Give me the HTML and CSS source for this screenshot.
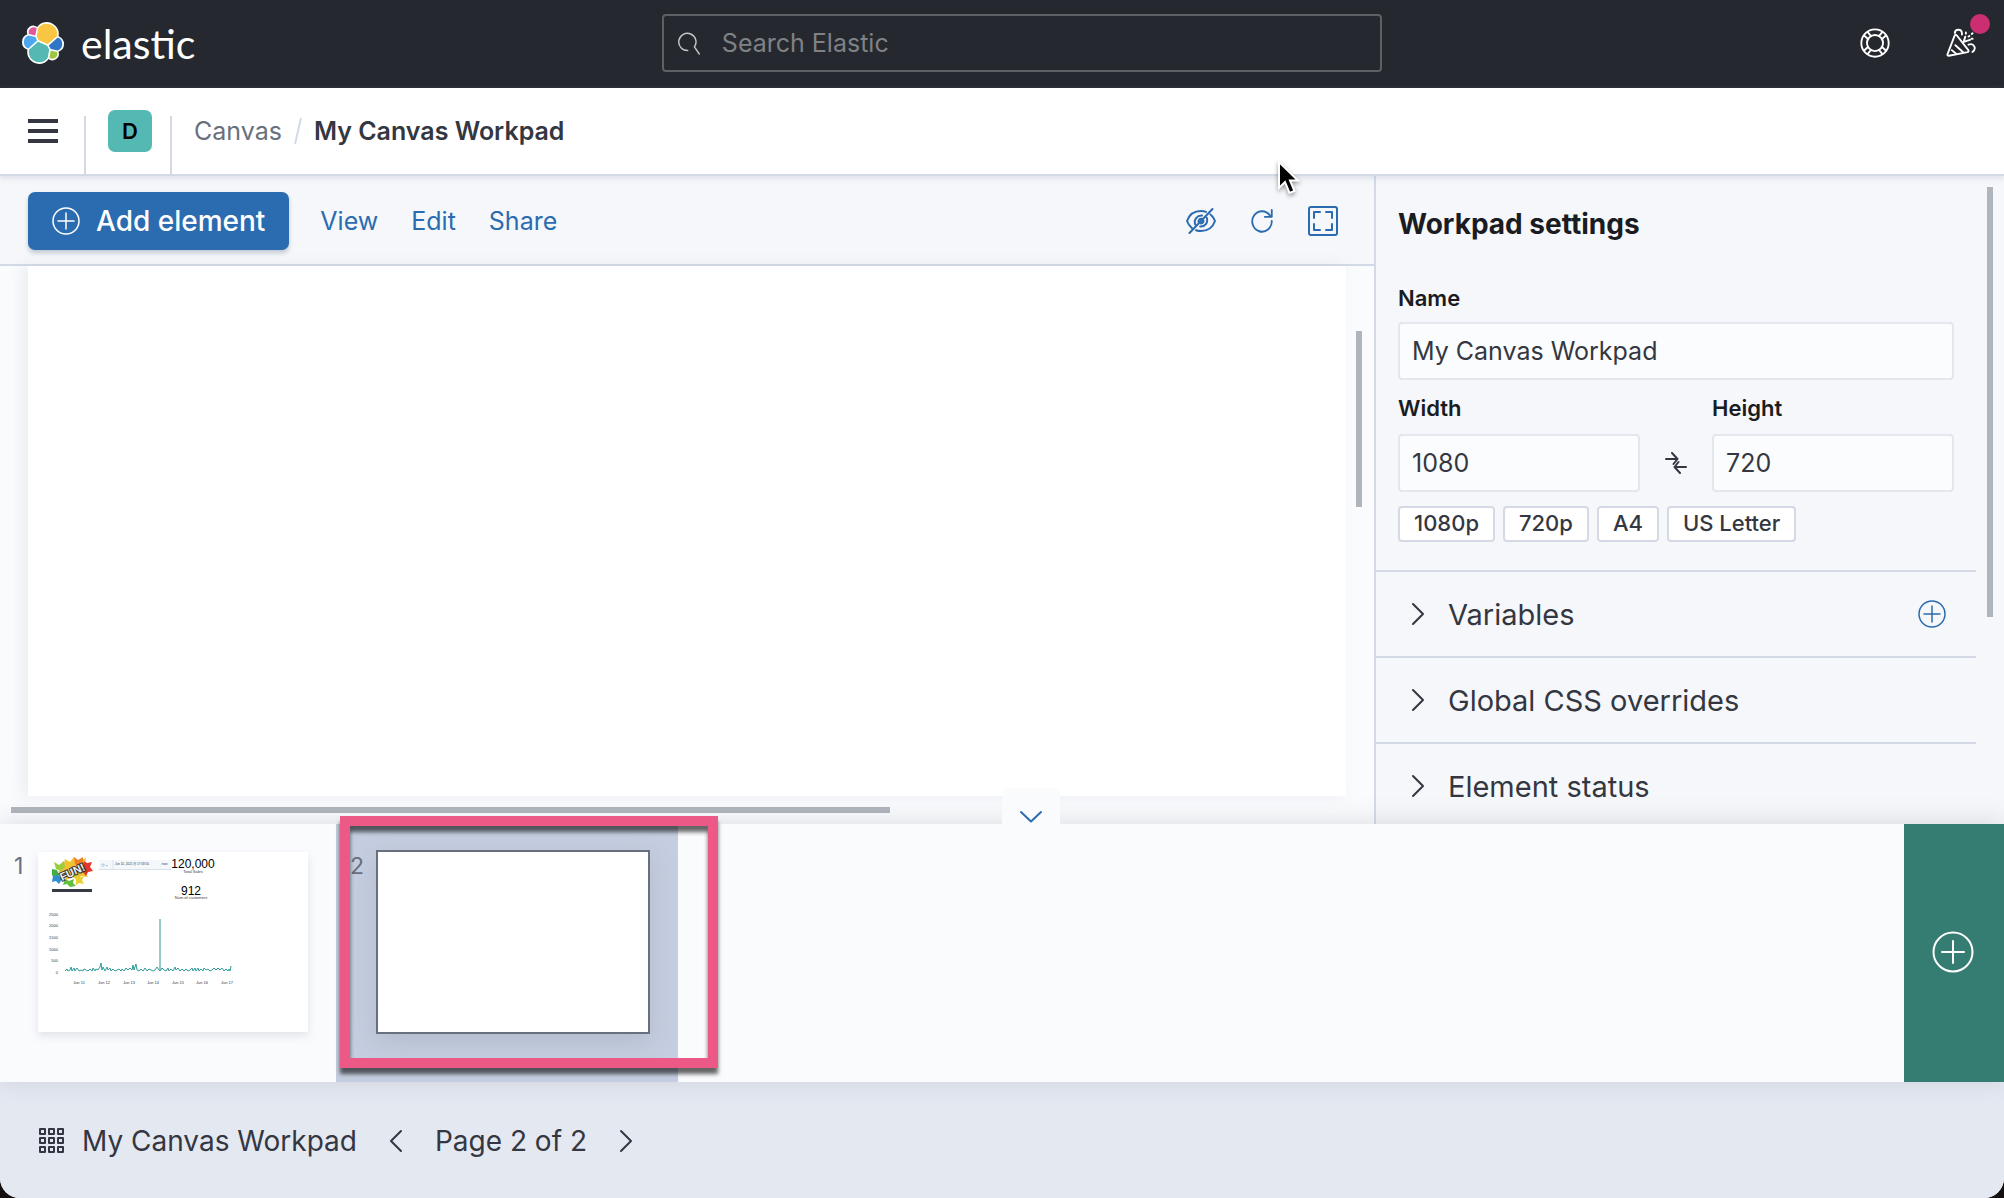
FILE: index.html
```html
<!DOCTYPE html>
<html lang="en">
<head>
  <meta charset="UTF-8" />
  <title>My Canvas Workpad - Canvas - Elastic</title>
  <link rel="stylesheet" href="styles.css">
</head>
<body>
  <div class="app">
    <header class="header">
      <a class="brand" href="#">
        <svg class="brand-logo" viewBox="0 0 32 32" aria-hidden="true">
          <path fill="#fff" d="M32 16.77a6.334 6.334 0 0 0-1.14-3.63 6.269 6.269 0 0 0-3.02-2.29 9.044 9.044 0 0 0-3.87-9.2 8.905 8.905 0 0 0-12.4 2.18 4.778 4.778 0 0 0-7.45 5.45A6.32 6.32 0 0 0 0 15.22a6.368 6.368 0 0 0 4.16 5.96 9.034 9.034 0 0 0 8.85 10.77 8.932 8.932 0 0 0 7.31-3.8 4.775 4.775 0 0 0 7.44-5.44A6.33 6.33 0 0 0 32 16.77"/>
          <path fill="#F8C642" d="m12.58 13.79 7 3.2 7.05-6.2c.1-.5.15-1.03.15-1.55a7.893 7.893 0 0 0-14.4-4.46l-1.18 6.1z"/>
          <path fill="#54B9B2" d="M5.37 21.21a7.9 7.9 0 0 0 7.7 9.47 7.87 7.87 0 0 0 6.52-3.47l1.16-6.05-1.55-2.97-7.02-3.2z"/>
          <path fill="#E2579A" d="m5.33 9.09 4.79 1.13 1.05-5.43a3.775 3.775 0 0 0-5.84 4.3"/>
          <path fill="#4DA7EF" d="M4.91 10.23a5.3 5.3 0 0 0-.15 9.95l6.72-6.07-1.23-2.64z"/>
          <path fill="#9DC740" d="M20.87 27.2a3.77 3.77 0 0 0 5.83-4.28l-4.78-1.12z"/>
          <path fill="#2F76C7" d="m21.85 20.53 5.26 1.23a5.3 5.3 0 0 0 .16-9.95l-6.89 6.04z"/>
        </svg>
        <span class="brand-name">elastic</span>
      </a>
      <label class="search">
        <svg class="icon search-icon" viewBox="0 0 16 16" aria-hidden="true"><path d="M7.500 12.900A6 6 0 1 1 12.100 10.400L15.500 15.300"/></svg>
        <input type="search" placeholder="Search Elastic" aria-label="Search Elastic">
      </label>
      <div class="header-links">
        <button class="icon-button" aria-label="Help">
          <svg class="icon help-icon" viewBox="0 0 16 16"><circle cx="8" cy="8" r="7.3"/><circle cx="8" cy="8" r="4.3"/><path d="M4 2.1 5.9 4.3M2.2 4 4.4 6M12 2.1 10.1 4.3M13.8 4 11.6 6M4 13.9 5.9 11.7M2.2 12 4.4 10M12 13.9 10.1 11.7M13.8 12 11.6 10"/></svg>
        </button>
        <button class="icon-button news" aria-label="News feed">
          <svg class="icon news-icon" viewBox="0 0 16 16"><path d="M4.6 4.1.8 14a.6.6 0 0 0 .7.8l10-1.9a.7.7 0 0 0 .3-1.2L5.8 4a.7.7 0 0 0-1.2.1zM3.100 11.800l2.400 2.100M5 9.200l4 3.600M4.700 2.700c.2-2.400 3.800-2.400 3.800.2v.6M9.400 7.400 10.300 4.600M9.400 7.400 12.800 6.300M12 8.900c3-1.200 4.500 2.200 2.100 3.900"/><path stroke-dasharray=".6 1.6" d="M10.600 2.400v2M12 4.600 14.600 2.500M13.600 5.700h1.400"/></svg>
          <span class="news-dot"></span>
        </button>
      </div>
    </header>

    <nav class="subheader" aria-label="Breadcrumbs">
      <button class="menu-button" aria-label="Toggle primary navigation"><span></span><span></span><span></span></button>
      <div class="space"><button class="avatar">D</button></div>
      <div class="breadcrumbs">
        <a href="#">Canvas</a>
        <svg class="slash" viewBox="0 0 10 28" aria-hidden="true"><path d="M8 1 2 27"/></svg>
        <strong>My Canvas Workpad</strong>
      </div>
    </nav>

    <main class="main">
      <section class="stage">
        <div class="toolbar">
          <button class="add-button">
            <svg class="icon icon-28" viewBox="0 0 28 28"><circle cx="14" cy="14" r="13"/><path d="M14 6v16M6 14h16"/></svg>
            Add element
          </button>
          <div class="menus">
            <button>View</button>
            <button>Edit</button>
            <button>Share</button>
          </div>
          <div class="view-tools">
            <button class="icon-button" aria-label="Hide editing controls">
              <svg class="icon eye-icon" viewBox="0 0 30 28"><path d="M3.500 26 26.500 2M6 21.200C3.800 19.300 2 16.800 1 14 3.200 7.600 8.600 4 15 4c1.800 0 3.500.3 5 .9M24.500 7.500C26.600 9.300 28.200 11.500 29 14c-2.200 6.400-7.600 10-14 10-1.800 0-3.500-.3-5-.8M9.200 17.500C7.600 12.500 11 8.300 16 8.600M20.800 10.800c1.500 4.800-1.800 9-6.600 8.700M12.500 15c-.2-2 1-3.300 3-3.200M17.500 13.500c0 1.600-.9 2.700-2.500 2.900"/></svg>
            </button>
            <button class="icon-button" aria-label="Refresh data">
              <svg class="icon refresh-icon" viewBox="0 0 24 28"><path d="M22.500 2v7.500H15M20.500 8A10.500 11 0 1 0 22.500 14"/></svg>
            </button>
            <button class="icon-button" aria-label="Enter fullscreen mode">
              <svg class="icon icon-30" viewBox="0 0 30 30"><rect x="1" y="1" width="28" height="28" rx="2"/><path d="M6 12V6h6M18 6h6v6M24 18v6h-6M12 24H6v-6"/></svg>
            </button>
          </div>
        </div>
        <div class="canvas">
          <div class="canvas-page"></div>
          <span class="thumb-y"></span>
          <span class="thumb-x"></span>
        </div>
      </section>

      <aside class="sidebar">
        <div class="settings">
          <h1>Workpad settings</h1>
          <label for="name">Name</label>
          <input id="name" type="text" value="My Canvas Workpad">
          <div class="size-row">
            <div class="field">
              <label for="width">Width</label>
              <input id="width" type="text" value="1080">
            </div>
            <button class="icon-button swap" aria-label="Flip width and height">
              <svg class="icon icon-22" viewBox="0 0 22 22"><path d="M1 7h11M7 1l5.500 6-4 5M21 15H10M15 21l-5.500-6 4-5"/></svg>
            </button>
            <div class="field">
              <label for="height">Height</label>
              <input id="height" type="text" value="720">
            </div>
          </div>
          <div class="presets">
            <button>1080p</button>
            <button>720p</button>
            <button>A4</button>
            <button>US Letter</button>
          </div>
        </div>
        <div class="accordion">
          <button class="accordion-toggle"><svg class="icon chevron" viewBox="0 0 14 24"><path d="M2 2l10 10L2 22"/></svg>Variables</button>
          <button class="icon-button blue" aria-label="Add variable">
            <svg class="icon icon-28" viewBox="0 0 28 28"><circle cx="14" cy="14" r="13"/><path d="M14 6v16M6 14h16"/></svg>
          </button>
        </div>
        <div class="accordion">
          <button class="accordion-toggle"><svg class="icon chevron" viewBox="0 0 14 24"><path d="M2 2l10 10L2 22"/></svg>Global CSS overrides</button>
        </div>
        <div class="accordion">
          <button class="accordion-toggle"><svg class="icon chevron" viewBox="0 0 14 24"><path d="M2 2l10 10L2 22"/></svg>Element status</button>
        </div>
        <span class="sidebar-thumb"></span>
      </aside>
    </main>

    <section class="tray" aria-label="Pages">
      <button class="tray-toggle" aria-label="Close page tray">
        <svg class="icon toggle-icon" viewBox="0 0 24 14"><path d="M2 2l10 9.500L22 2"/></svg>
      </button>
      <div class="page-item">
        <span class="page-number">1</span>
        <a class="page-preview" href="#" aria-label="Page 1">
          <svg viewBox="0 0 270 180" aria-hidden="true">
            <g>
              <path fill="#f2c230" d="M27 7l5 3 4-5 4 4 8-3-1 6 5 4-6 3 4 6-7-1-3 5-5-4-7 3-2-6-6-2 5-4z"/>
              <path fill="#ef7f24" d="M36 5l4 3 5-3v5l5 2-6 3-7-3z"/>
              <path fill="#e0362c" d="M46 9l3 2 5-1-2 5 3 4-5 1-2 4-3-4-4-2 4-3z"/>
              <path fill="#9ccb3c" d="M16 10l5 3 5-4 1 6-4 4-5-2z"/>
              <path fill="#3fae49" d="M14 17l5 1 2 5-4 4-3-4z"/>
              <path fill="#2b8fd0" d="M15 24l5-1 4 4-3 5-3-3-4 1z"/>
              <path fill="#62c13c" d="M27 27l4 2 5-2-1 4 3 3-6 1-3-3-4 1z"/>
              <path fill="#e8d02f" d="M38 24l3 2 5-2-2 4 2 4-5-1-3 2z"/>
              <text class="fun" x="24" y="29" transform="rotate(-25 24 29)">FUN!</text>
            </g>
            <path fill="#353a45" d="M14 37h40v3H14z"/>
            <path fill="#f5f8fb" d="M61 8h72v10H61z"/>
            <path class="picker" d="M61 17.500h72M75 8v9"/>
            <text class="tiny blue-text" x="63" y="14">◷ ⌄</text>
            <text class="tiny small" x="77" y="13">Jun 10, 2021 @ 17:58:50.</text>
            <text class="tiny small" x="120" y="13">→ now</text>
            <text class="metric" x="155" y="16">120,000</text>
            <text class="tiny" x="155" y="21" text-anchor="middle">Total Sales</text>
            <text class="metric" x="153" y="43">912</text>
            <text class="tiny" x="153" y="47" text-anchor="middle">Num of customers</text>
            <g class="tiny" text-anchor="end">
              <text x="20" y="64">2500</text><text x="20" y="75">2000</text><text x="20" y="87">1500</text>
              <text x="20" y="99">1000</text><text x="20" y="110">500</text><text x="20" y="122">0</text>
            </g>
            <g class="tiny" text-anchor="middle">
              <text x="41" y="132">Jun 11</text><text x="66" y="132">Jun 12</text><text x="91" y="132">Jun 13</text>
              <text x="115" y="132">Jun 14</text><text x="140" y="132">Jun 15</text><text x="164" y="132">Jun 16</text><text x="189" y="132">Jun 17</text>
            </g>
            <polyline class="series" points="27,119 29,117 30,119 32,118 33,115 34,119 36,116 37,119 39,116 41,119 43,118 45,119 46,117 48,118 50,119 52,117 54,119 55,116 57,119 58,117 60,118 62,115 63,111 64,118 65,115 67,119 69,115 70,118 72,116 73,119 75,117 77,119 79,118 81,117 83,119 84,117 86,119 88,116 90,118 92,116 94,118 95,113 96,118 98,112 99,118 101,119 103,117 105,119 107,116 109,119 111,117 113,118 115,119 117,118 119,115 121,118 122,119 124,116 126,118 128,119 130,116 131,119 133,117 135,119 137,115 138,118 140,116 142,119 144,117 146,119 148,117 150,119 152,118 154,116 155,119 157,116 158,119 160,116 161,119 163,117 165,119 166,116 168,118 170,117 172,119 174,118 176,116 178,118 180,116 182,118 184,116 186,119 188,117 190,119 191,117 192,119 193,114"/>
            <path class="spike" d="M122 118V67"/>
          </svg>
        </a>
      </div>
      <div class="page-item selected">
        <span class="page-number">2</span>
        <a class="page-preview" href="#" aria-label="Page 2"></a>
        <span class="highlight"></span>
      </div>
      <button class="add-page" aria-label="Add a new page">
        <svg class="icon add-page-icon" viewBox="0 0 42 42"><circle cx="21" cy="21" r="19.500"/><path d="M21 10v22M10 21h22"/></svg>
      </button>
    </section>

    <footer class="footer">
      <button class="workpad-name">
        <svg class="icon grid-icon" viewBox="0 0 26 26"><path d="M1 1h5v5H1zM10 1h5v5h-5zM19 1h5v5h-5zM1 10h5v5H1zM10 10h5v5h-5zM19 10h5v5h-5zM1 19h5v5H1zM10 19h5v5h-5zM19 19h5v5h-5z"/></svg>
        My Canvas Workpad
      </button>
      <button class="icon-button" aria-label="Previous page"><svg class="icon chevron" viewBox="0 0 14 24"><path d="M12 2L2 12l10 10"/></svg></button>
      <button class="page-count">Page 2 of 2</button>
      <button class="icon-button" aria-label="Next page"><svg class="icon chevron" viewBox="0 0 14 24"><path d="M2 2l10 10L2 22"/></svg></button>
    </footer>
  </div>

  <svg class="pointer" viewBox="0 0 26 40" aria-hidden="true"><path d="M3 3v26l6-6 4.500 11 5-2-4.500-10.500H22z"/></svg>
</body>
</html>
```

FILE: styles.css
```css
* {
  box-sizing: border-box;
}
body {
  margin: 0;
  background: #140f10;
  color: #343741;
  font-family: Inter, "Liberation Sans", sans-serif;
  font-size: 25px;
}
button {
  padding: 0;
  border: 0;
  background: none;
  color: inherit;
  font: inherit;
  white-space: nowrap;
}
a {
  color: inherit;
  text-decoration: none;
}
svg {
  display: block;
}
.app {
  display: flex;
  flex-direction: column;
  height: 100vh;
  overflow: hidden;
  border-radius: 0 0 20px 20px;
  background: #fafbfd;
}

/* icons */
.icon {
  flex: none;
  fill: none;
  stroke: currentColor;
  stroke-width: 2;
  stroke-linecap: round;
  stroke-linejoin: round;
}
.icon-button {
  display: flex;
  align-items: center;
  justify-content: center;
}
.icon-22 { width: 22px; height: 22px; }
.icon-28 { width: 28px; height: 28px; }
.icon-30 { width: 30px; height: 30px; }
.chevron { width: 14px; height: 24px; }

/* top header */
.header {
  display: grid;
  grid-template-columns: 14fr 720px 13fr;
  align-items: center;
  flex: none;
  height: 88px;
  padding: 0 28px 2px 22px;
  background: #25282f;
  color: #fff;
}
.brand {
  display: flex;
  align-items: center;
  gap: 17px;
}
.brand-logo {
  width: 42px;
  height: 42px;
}
.brand-name {
  padding-top: 2px;
  font-family: Lato, sans-serif;
  font-size: 41px;
  line-height: 48px;
}
.search {
  display: flex;
  align-items: center;
  gap: 22px;
  height: 58px;
  padding: 0 13px;
  border: 2px solid #5d6065;
  border-radius: 4px;
}
.search-icon {
  width: 23px;
  height: 23px;
  color: #c4c5c8;
  stroke-width: 1;
}
.search input {
  flex: 1;
  padding: 0;
  border: 0;
  background: none;
  color: #fff;
  font: inherit;
}
.search input::placeholder {
  color: #7f8185;
}
.header-links {
  display: flex;
  justify-content: flex-end;
  align-items: center;
  gap: 56px;
}
.help-icon {
  width: 30px;
  height: 30px;
  stroke-width: 1;
}
.news {
  position: relative;
}
.news-icon {
  width: 30px;
  height: 30px;
  stroke-width: 1;
}
.news-dot {
  position: absolute;
  top: -14px;
  right: -14px;
  width: 20px;
  height: 20px;
  border-radius: 50%;
  background: #cb2f72;
}

/* breadcrumb bar */
.subheader {
  position: relative;
  z-index: 1;
  display: flex;
  align-items: flex-end;
  flex: none;
  height: 88px;
  border-bottom: 2px solid #d3dae6;
  background: #fff;
  box-shadow: 0 2px 6px rgba(152, 162, 179, .3);
}
.menu-button {
  display: flex;
  flex-direction: column;
  align-items: center;
  gap: 6px;
  width: 84px;
  height: 55px;
}
.menu-button span {
  width: 30px;
  height: 4px;
  margin-left: 2px;
  background: #343741;
}
.space {
  display: flex;
  justify-content: center;
  height: 58px;
  width: 88px;
  padding-left: 4px;
  border: solid #d3dae6;
  border-width: 0 2px;
}
.avatar {
  width: 44px;
  height: 42px;
  margin-top: -6px;
  border-radius: 7px;
  background: #54b9b2;
  color: #000;
  font-size: 22px;
  font-weight: 600;
}
.breadcrumbs {
  display: flex;
  align-items: center;
  gap: 10px;
  height: 86px;
  padding-left: 22px;
  color: #69707d;
}
.breadcrumbs strong {
  color: #343741;
  font-weight: 600;
}
.slash {
  width: 12px;
  height: 28px;
  fill: none;
  stroke: #d3dae6;
  stroke-width: 2;
}

/* editor */
.main {
  display: flex;
  flex: 1;
  min-height: 0;
}
.stage {
  display: flex;
  flex-direction: column;
  flex: 1;
  min-width: 0;
}
.toolbar {
  display: flex;
  align-items: center;
  flex: none;
  height: 90px;
  padding: 2px 36px 0 28px;
  border-bottom: 2px solid #d3dae6;
  background: #f5f7fa;
  color: #2b6cb0;
}
.add-button {
  display: flex;
  align-items: center;
  gap: 16px;
  height: 58px;
  padding: 0 24px;
  border-radius: 7px;
  background: #2b6bb0;
  box-shadow: 0 3px 4px rgba(43, 64, 100, .25);
  color: #fff;
  font-size: 28px;
  font-weight: 500;
}
.add-button .icon {
  stroke-width: 1.5;
}
.menus {
  display: flex;
  gap: 33px;
  margin-left: 31px;
}
.view-tools {
  display: flex;
  align-items: center;
  gap: 34px;
  margin-left: auto;
}
.eye-icon { width: 30px; height: 28px; }
.refresh-icon { width: 24px; height: 26px; }
.canvas {
  position: relative;
  flex: 1;
  padding: 0 28px;
  padding-bottom: 28px;
}
.canvas-page {
  height: 100%;
  background: #fff;
  box-shadow: -6px 0 14px rgba(152, 162, 179, .15);
}
.thumb-x,
.thumb-y,
.sidebar-thumb {
  position: absolute;
  background: #b0b4bc;
}
.thumb-y {
  top: 65px;
  right: 12px;
  width: 6px;
  height: 176px;
}
.thumb-x {
  bottom: 11px;
  left: 11px;
  width: 64%;
  height: 6px;
}

/* sidebar */
.sidebar {
  position: relative;
  flex: none;
  width: 630px;
  padding-right: 28px;
  overflow: hidden;
  border-left: 2px solid #d3dae6;
  background: #f5f7fa;
}
.sidebar-thumb {
  top: 11px;
  right: 11px;
  width: 6px;
  height: 430px;
}
.settings {
  padding: 30px 22px 28px 22px;
}
.settings h1 {
  margin: 0 0 40px;
  color: #1a1c21;
  font-size: 28px;
  font-weight: 700;
  line-height: 36px;
}
.settings label {
  display: block;
  height: 40px;
  color: #1a1c21;
  font-size: 22px;
  font-weight: 600;
  line-height: 32px;
}
.settings input {
  display: block;
  width: 100%;
  height: 58px;
  padding: 0 12px;
  border: 2px solid #e4e7ee;
  border-radius: 4px;
  background: #fbfcfd;
  color: #343741;
  font: inherit;
}
.size-row {
  display: flex;
  align-items: flex-end;
  margin-top: 12px;
}
.size-row label {
  height: 42px;
}
.field {
  flex: 1;
}
.swap {
  width: 72px;
  height: 58px;
}
.presets {
  display: flex;
  gap: 8px;
  margin-top: 14px;
}
.presets button {
  height: 36px;
  padding: 0 14px 2px;
  border: 2px solid #d3dae6;
  border-radius: 4px;
  background: #fff;
  font-size: 22px;
  font-weight: 500;
  line-height: 30px;
}
.accordion {
  display: flex;
  align-items: center;
  justify-content: space-between;
  height: 86px;
  padding: 0 30px 0 35px;
  border-top: 2px solid #d3dae6;
}
.accordion-toggle {
  display: flex;
  align-items: center;
  gap: 23px;
  font-size: 29px;
}
.blue {
  color: #2b6cb0;
}
.blue .icon {
  stroke-width: 1.5;
}

/* page tray */
.tray {
  position: relative;
  display: flex;
  flex: none;
  height: 258px;
  background: #fafbfd;
  box-shadow: 0 -2px 24px rgba(105, 112, 125, .2);
}
.tray-toggle {
  position: absolute;
  top: -36px;
  left: 50%;
  display: flex;
  justify-content: center;
  width: 58px;
  height: 58px;
  padding-top: 22px;
  border-radius: 8px;
  background: #fafbfd;
  color: #2b6cb0;
}
.toggle-icon {
  width: 24px;
  height: 14px;
}
.page-item {
  position: relative;
  display: flex;
  width: 336px;
  padding: 26px 28px 0 14px;
}
.page-item.selected {
  width: 342px;
  background: #c5cee0;
}
.page-number {
  width: 24px;
  color: #69707d;
  font-size: 23px;
  line-height: 32px;
}
.page-preview {
  width: 270px;
  height: 180px;
  margin-top: 2px;
  background: #fff;
  box-shadow: 0 4px 8px rgba(152, 162, 179, .25);
}
.selected .page-number {
  width: 26px;
}
.selected .page-preview {
  width: 274px;
  height: 184px;
  margin-top: 0;
  border: 2px solid #69707d;
  box-shadow: 0 8px 24px rgba(105, 112, 125, .2);
}
.highlight {
  position: absolute;
  top: -8px;
  left: 4px;
  width: 378px;
  height: 252px;
  border: 10px solid #ec5987;
  box-shadow: 0 6px 4px rgba(0, 0, 0, .6), inset 0 6px 4px rgba(0, 0, 0, .6);
}
.add-page {
  display: flex;
  align-items: center;
  justify-content: center;
  width: 100px;
  margin-left: auto;
  padding: 0 2px 2px 0;
  background: #357c72;
  color: #fff;
}
.add-page-icon {
  width: 42px;
  height: 42px;
  stroke-width: 2;
}

/* page 1 preview */
.tiny {
  fill: #343741;
  font-family: "Liberation Sans", sans-serif;
  font-size: 4px;
}
.small {
  font-size: 3px;
}
.blue-text {
  fill: #2b6cb0;
}
.metric {
  fill: #000;
  font-family: "Liberation Sans", sans-serif;
  font-size: 12px;
  text-anchor: middle;
}
.fun {
  fill: #eee;
  stroke: #333;
  stroke-width: 2;
  paint-order: stroke;
  font-family: "Liberation Sans", sans-serif;
  font-size: 11px;
  font-weight: 700;
}
.picker {
  fill: none;
  stroke: #d9e2ec;
}
.series,
.spike {
  fill: none;
  stroke: #2f9c9a;
}

/* footer */
.footer {
  display: flex;
  align-items: center;
  flex: none;
  height: 116px;
  padding: 2px 39px 0;
  background: #e4e8f1;
  font-size: 28px;
}
.workpad-name {
  display: flex;
  align-items: center;
  gap: 17px;
}
.grid-icon {
  width: 26px;
  height: 26px;
}
.footer .icon-button {
  width: 78px;
}

.pointer {
  position: absolute;
  top: 159px;
  left: 1276px;
  z-index: 2;
  width: 26px;
  height: 40px;
  fill: #000;
  stroke: #fff;
  stroke-width: 2;
  filter: drop-shadow(0 2px 2px rgba(0, 0, 0, .4));
}
```
